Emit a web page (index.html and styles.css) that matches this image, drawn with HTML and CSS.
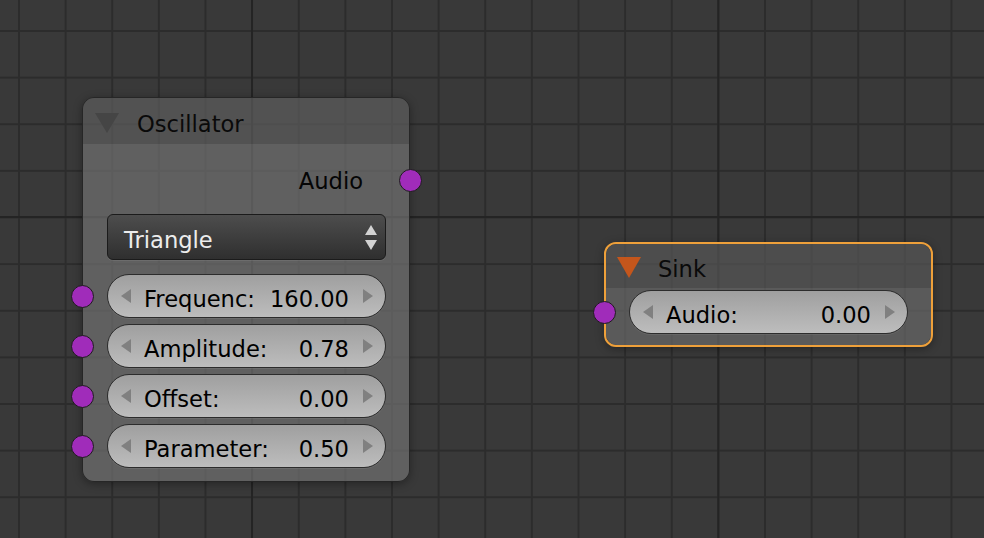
FILE: index.html
```html
<!DOCTYPE html>
<html lang="en">
<head>
    <meta charset="UTF-8">
    <meta name="viewport" content="width=device-width, initial-scale=1.0">
    <title>Node Editor</title>
    <link rel="stylesheet" href="styles.css">
</head>
<body>

    <div class="canvas">

        <!-- Oscillator node -->
        <div class="node node-osc">
            <div class="node-header">
                <svg class="collapse" width="24" height="20" viewBox="0 0 24 20"><polygon points="0,0 24,0 12,20" /></svg>
                <span class="node-title">Oscillator</span>
            </div>
            <div class="node-body">
                <div class="output-row">
                    <span class="text">Audio</span>
                    <span class="socket socket-out"></span>
                </div>
                <div class="dropdown">
                    <span class="text">Triangle</span>
                    <svg class="updown" width="12" height="25" viewBox="0 0 12 25">
                        <polygon points="6,0 12,10 0,10" />
                        <polygon points="0,15 12,15 6,25" />
                    </svg>
                </div>
                <div class="slider">
                    <span class="socket socket-in"></span>
                    <span class="arrow arrow-left"></span>
                    <span class="text slider-label">Frequenc:</span>
                    <span class="text slider-value">160.00</span>
                    <span class="arrow arrow-right"></span>
                </div>
                <div class="slider">
                    <span class="socket socket-in"></span>
                    <span class="arrow arrow-left"></span>
                    <span class="text slider-label">Amplitude:</span>
                    <span class="text slider-value">0.78</span>
                    <span class="arrow arrow-right"></span>
                </div>
                <div class="slider">
                    <span class="socket socket-in"></span>
                    <span class="arrow arrow-left"></span>
                    <span class="text slider-label">Offset:</span>
                    <span class="text slider-value">0.00</span>
                    <span class="arrow arrow-right"></span>
                </div>
                <div class="slider">
                    <span class="socket socket-in"></span>
                    <span class="arrow arrow-left"></span>
                    <span class="text slider-label">Parameter:</span>
                    <span class="text slider-value">0.50</span>
                    <span class="arrow arrow-right"></span>
                </div>
            </div>
        </div>

        <!-- Sink node (selected) -->
        <div class="node node-sink">
            <div class="node-header">
                <svg class="collapse" width="24" height="21" viewBox="0 0 24 21"><polygon points="0,0 24,0 12,21" /></svg>
                <span class="node-title">Sink</span>
            </div>
            <div class="node-body">
                <div class="slider">
                    <span class="socket socket-in"></span>
                    <span class="arrow arrow-left"></span>
                    <span class="text slider-label">Audio:</span>
                    <span class="text slider-value">0.00</span>
                    <span class="arrow arrow-right"></span>
                </div>
            </div>
        </div>

    </div>
</body>
</html>
```

FILE: styles.css
```css
body {
    margin: 0;
    font-family: "DejaVu Sans", "Liberation Sans", sans-serif;
    font-size: 22.6px;
    overflow: hidden;
}
.canvas {
    position: relative;
    width: 984px;
    height: 538px;
    background-color: #393939;
    /* major lines every 10 cells, minor every cell */
    background-image:
        linear-gradient(to right, #242424 2px, transparent 2px),
        linear-gradient(to bottom, #242424 2px, transparent 2px),
        linear-gradient(to right, #2c2c2c 2px, transparent 2px),
        linear-gradient(to bottom, #2c2c2c 2px, transparent 2px);
    background-size: 466.3px 466.3px, 466.3px 466.3px, 46.63px 46.63px, 46.63px 46.63px;
    background-position: 251px 0, 0 216px, 18px 0, 0 30px;
}

/* Nodes */
.node {
    position: absolute;
    width: 328px;
    box-sizing: border-box;
    border: 1px solid #262626;
    border-radius: 12px;
    box-shadow: 0 2px 8px rgba(0,0,0,0.35);
}
.node-osc { left: 82px; top: 97px; }
.node-sink {
    left: 604px;
    top: 242px;
    width: 329px;
    border: 2px solid #eea03a; /* active selection */
}
.node-header {
    display: flex;
    align-items: center;
    height: 46px;
    box-sizing: border-box;
    padding: 3px 0 0 12px;
    border-radius: 11px 11px 0 0;
    background-color: rgba(92,92,92,0.7);
}
.node-sink .node-header {
    height: 44px;
    padding-left: 11px;
    background-color: rgba(85,85,85,0.72);
}
.collapse { fill: #454545; margin-right: 18px; }
.node-sink .collapse { fill: #c4561c; margin-right: 17px; }
.node-title { color: #0a0a0a; padding-top: 2px; }
.node-body {
    padding: 22px 23px 13px 24px;
    border-radius: 0 0 11px 11px;
    background-color: rgba(112,112,112,0.7);
}
.node-sink .node-body {
    padding: 2px 23px 11px 23px;
    background-color: rgba(102,102,102,0.72);
}
.text { padding-top: 5px; }

/* Sockets */
.socket {
    position: absolute;
    width: 23px;
    height: 23px;
    box-sizing: border-box;
    border: 1px solid #1d1d1d;
    border-radius: 50%;
    background-color: #a02cba;
    top: 50%;
    margin-top: -11.5px;
}
.socket-in { left: -37px; }
.socket-out { right: -36px; }

/* Rows */
.output-row {
    position: relative;
    display: flex;
    justify-content: flex-end;
    align-items: center;
    height: 28px;
    padding-right: 23px;
    color: #050505;
}
.output-row .text { padding-top: 2px; }
.dropdown {
    display: flex;
    align-items: center;
    justify-content: space-between;
    height: 46px;
    box-sizing: border-box;
    margin-top: 20px;
    padding: 0 8px 0 16px;
    border: 1px solid #1b1b1b;
    border-radius: 6px;
    background: linear-gradient(#4d4d4d, #2f2f2f);
    box-shadow: 0 1px 0 rgba(255,255,255,0.08);
    color: #ececec;
}
.updown { fill: #d2d2d2; }
.slider {
    position: relative;
    display: flex;
    align-items: center;
    height: 44px;
    box-sizing: border-box;
    margin-top: 6px;
    padding: 0 12px 0 13px;
    border: 1px solid #2c2c2c;
    border-radius: 22px;
    background: linear-gradient(#9f9f9f, #bdbdbd);
    box-shadow: 0 1px 0 rgba(255,255,255,0.08);
    color: #000;
}
.dropdown + .slider { margin-top: 14px; }
.node-sink .slider { margin-top: 0; }
.slider-label { flex: 1; margin-left: 13px; }
.slider-value { margin-right: 14px; }
.arrow {
    width: 0;
    height: 0;
    border-top: 7px solid transparent;
    border-bottom: 7px solid transparent;
}
.arrow-left { border-right: 10px solid #808080; }
.arrow-right { border-left: 10px solid #808080; }
```
